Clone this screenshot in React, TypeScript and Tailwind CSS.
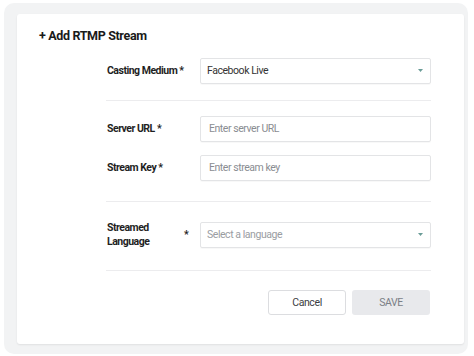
import React from "react";

function Caret() {
  return (
    <svg width="5" height="3" viewBox="0 0 5 3" className="shrink-0">
      <path d="M0 0 L5 0 L2.5 3 Z" fill="#6a9c97" />
    </svg>
  );
}

function Label({ children }: { children: React.ReactNode }) {
  return (
    <div className="w-[94px] shrink-0 pl-[1px] text-[10.5px] font-bold leading-[14px] tracking-[-0.5px] text-[#1f1f1f]">
      {children}
    </div>
  );
}

export default function App() {
  return (
    <div className="w-[474px] h-[356px] bg-white" style={{ fontFamily: "Roboto, 'Liberation Sans', sans-serif" }}>
      <div className="ml-[4px] pt-[3px] w-[464px]">
        <div className="bg-[#f2f3f4] rounded-[10px] pl-[13px] pt-[11px] pr-[4px] pb-[10px]">
          <div className="bg-white rounded-[3px] shadow-[0_1px_2px_rgba(0,0,0,0.08)] pl-[22px] pr-[32px] pt-[12px] pb-[29px]">
            <div className="text-[12.5px] font-bold leading-[20px] tracking-[-0.35px] text-[#1a1a1a]">+ Add RTMP Stream</div>
            <div className="ml-[67px] w-[325px]">
              <div className="mt-[12px] flex items-center">
                <Label>Casting Medium *</Label>
                <div className="flex-1 h-[26px] border border-[#e3e4e6] rounded-[2px] flex items-center justify-between pl-[6px] pr-[7px] pb-[1px] shadow-[0_1px_1px_rgba(0,0,0,0.03)]">
                  <span className="text-[10.5px] tracking-[-0.45px] text-[#333]">Facebook Live</span>
                  <Caret />
                </div>
              </div>
              <div className="mt-[16px] h-px bg-[#ececee]" />
              <div className="mt-[15px] flex items-center">
                <Label>Server URL *</Label>
                <div className="flex-1 h-[26px] border border-[#e3e4e6] rounded-[2px] flex items-center pl-[8px] pb-[1px] shadow-[0_1px_1px_rgba(0,0,0,0.03)]">
                  <span className="text-[10.5px] tracking-[-0.45px] text-[#8a8d92]">Enter server URL</span>
                </div>
              </div>
              <div className="mt-[13px] flex items-center">
                <Label>Stream Key *</Label>
                <div className="flex-1 h-[26px] border border-[#e3e4e6] rounded-[2px] flex items-center pl-[8px] pb-[1px] shadow-[0_1px_1px_rgba(0,0,0,0.03)]">
                  <span className="text-[10.5px] tracking-[-0.45px] text-[#8a8d92]">Enter stream key</span>
                </div>
              </div>
              <div className="mt-[20px] h-px bg-[#ececee]" />
              <div className="mt-[19px] flex items-center">
                <div className="w-[94px] shrink-0 pl-[1px] flex items-center text-[10.5px] font-bold leading-[14px] tracking-[-0.5px] text-[#1f1f1f]">
                  <span className="w-[77px]">Streamed<br />Language</span>
                  <span>*</span>
                </div>
                <div className="flex-1 h-[26px] border border-[#e3e4e6] rounded-[2px] flex items-center justify-between pl-[6px] pr-[7px] pb-[1px] shadow-[0_1px_1px_rgba(0,0,0,0.03)]">
                  <span className="text-[10.5px] tracking-[-0.45px] text-[#9a9da2]">Select a language</span>
                  <Caret />
                </div>
              </div>
              <div className="mt-[21px] h-px bg-[#ececee]" />
              <div className="mt-[19px] flex justify-end gap-[6px] pr-[1px]">
                <button className="w-[78px] h-[25px] border border-[#dcdde0] rounded-[3px] bg-white text-[10.5px] tracking-[-0.4px] text-[#3a3d42]">Cancel</button>
                <button className="w-[78px] h-[25px] rounded-[3px] bg-[#e8e9ec] text-[10.5px] tracking-[-0.4px] text-[#7b7f86]">SAVE</button>
              </div>
            </div>
          </div>
        </div>
      </div>
    </div>
  );
}
